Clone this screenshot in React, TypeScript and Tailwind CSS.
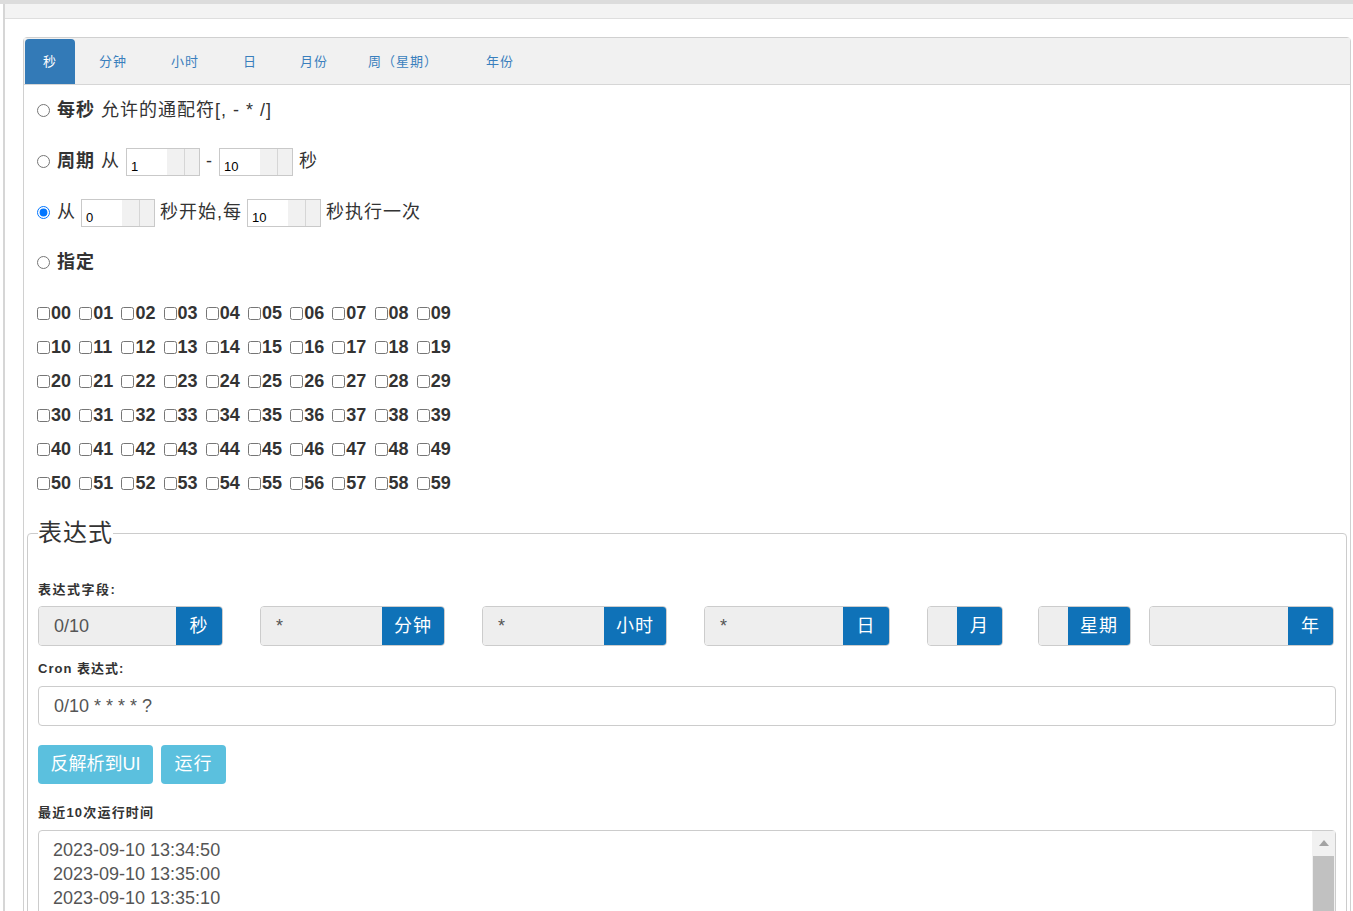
import React from 'react';

const tabs = [
  { label: '秒', w: 'w-[50px]' },
  { label: '分钟', w: 'w-[76px]' },
  { label: '小时', w: 'w-[68px]' },
  { label: '日', w: 'w-[62px]' },
  { label: '月份', w: 'w-[66px]' },
  { label: '周（星期）', w: 'w-[112px]' },
  { label: '年份', w: 'w-[82px]' },
];

const fields = [
  { addon: '秒', value: '0/10', w: 'w-[185px]', aw: 'w-[46px]', ml: 'ml-0' },
  { addon: '分钟', value: '*', w: 'w-[185px]', aw: 'w-[62px]', ml: 'ml-[37px]' },
  { addon: '小时', value: '*', w: 'w-[185px]', aw: 'w-[62px]', ml: 'ml-[37px]' },
  { addon: '日', value: '*', w: 'w-[186px]', aw: 'w-[46px]', ml: 'ml-[37px]' },
  { addon: '月', value: '', w: 'w-[76px]', aw: 'w-[45px]', ml: 'ml-[37px]' },
  { addon: '星期', value: '', w: 'w-[93px]', aw: 'w-[62px]', ml: 'ml-[35px]' },
  { addon: '年', value: '', w: 'w-[185px]', aw: 'w-[45px]', ml: 'ml-[18px]' },
];

const runTimes = ['2023-09-10 13:34:50', '2023-09-10 13:35:00', '2023-09-10 13:35:10'];

function NumberBox({ value }: { value: string }) {
  return (
    <div className="flex h-[28px] w-[74px] border border-[#c9c9c9] bg-white">
      <span className="w-[40px] pl-[4px] pt-[10px] text-[13px] leading-[16px] tracking-normal text-black">{value}</span>
      <span className="w-[17px] bg-[#f1f1f1]" />
      <span className="flex-1 border-l border-[#d6d6d6] bg-[#f1f1f1]" />
    </div>
  );
}

export default function App() {
  const rows = Array.from({ length: 6 }, (_, r) =>
    Array.from({ length: 10 }, (_, c) => String(r * 10 + c).padStart(2, '0'))
  );

  return (
    <div className="min-h-[911px] overflow-hidden bg-white font-['Liberation_Sans','Noto_Sans_CJK_SC',sans-serif] text-[#333]">
      <div className="h-[4px] bg-[#dcdcdc]" />
      <div className="ml-[3px] border-l-2 border-[#d6d6d6]">
        <div className="h-[15px] border-b border-[#dedede] bg-[#f3f3f3]" />
        <div className="pl-[18px] pr-[2px] pt-[18px]">
          <div className="rounded-t-[4px] border border-[#d0d0d0]">
            {/* tabs */}
            <div className="flex h-[47px] border-b border-[#d6d6d6] bg-[#f1f1f1] pl-[1px] pt-[1px]">
              {tabs.map((t, i) => (
                <div
                  key={t.label}
                  className={`${t.w} flex h-[45px] items-center justify-center text-[13px] tracking-[1px] ${
                    i === 0 ? 'rounded-t-[4px] bg-[#337ab7] text-white' : 'text-[#3a7fbd]'
                  }`}
                >
                  {t.label}
                </div>
              ))}
            </div>

            {/* seconds panel */}
            <div className="pl-[13px] text-[18px]">
              <div className="flex h-[51px] items-center gap-[7px]">
                <input type="radio" name="sec" className="m-0 h-[13px] w-[13px]" />
                <span className="tracking-[1px]">
                  <b>每秒</b> 允许的通配符[, - * /]
                </span>
              </div>
              <div className="flex h-[51px] items-center">
                <input type="radio" name="sec" className="m-0 mr-[7px] h-[13px] w-[13px]" />
                <div className="flex items-center gap-[6px] tracking-[1px]">
                  <b>周期</b>
                  <span>从</span>
                  <NumberBox value="1" />
                  <span>-</span>
                  <NumberBox value="10" />
                  <span>秒</span>
                </div>
              </div>
              <div className="flex h-[51px] items-center">
                <input type="radio" name="sec" defaultChecked className="m-0 mr-[7px] h-[13px] w-[13px]" />
                <div className="flex items-center gap-[5px] tracking-[1px]">
                  <span>从</span>
                  <NumberBox value="0" />
                  <span>秒开始,每</span>
                  <NumberBox value="10" />
                  <span>秒执行一次</span>
                </div>
              </div>
              <div className="flex h-[48px] items-center gap-[7px]">
                <input type="radio" name="sec" className="m-0 h-[13px] w-[13px]" />
                <b className="tracking-[1px]">指定</b>
              </div>

              <div className="pt-[10px]">
                {rows.map((row, r) => (
                  <div key={r} className="flex h-[34px] items-center">
                    {row.map((n) => (
                      <label key={n} className="flex w-[42.2px] items-center">
                        <input type="checkbox" className="m-0 h-[13px] w-[13px]" />
                        <b className="ml-[1px] text-[18px]">{n}</b>
                      </label>
                    ))}
                  </div>
                ))}
              </div>
            </div>

            {/* expression */}
            <fieldset className="ml-[3px] mr-[3px] mt-[19px] rounded-[4px] border border-[#cccccc] px-[10px] pb-[10px]">
              <legend className="text-[24px] leading-[28px] tracking-[1px]">表达式</legend>
              <div className="mt-[34px] text-[13px] font-bold leading-[18px] tracking-[1.5px]">表达式字段:</div>
              <div className="mt-[7px] flex">
                {fields.map((f) => (
                  <div
                    key={f.addon}
                    className={`${f.w} ${f.ml} flex h-[40px] overflow-hidden rounded-[4px] border border-[#cccccc]`}
                  >
                    <div className="flex flex-1 items-center bg-[#eeeeee] pl-[15px] text-[18px] text-[#555]">
                      {f.value}
                    </div>
                    <div className={`${f.aw} flex items-center justify-center bg-[#0f72b8] text-[18px] tracking-[1px] text-white`}>
                      {f.addon}
                    </div>
                  </div>
                ))}
              </div>

              <div className="mt-[14px] text-[13px] font-bold leading-[18px] tracking-[1px]">Cron 表达式:</div>
              <div className="mt-[8px] flex h-[40px] items-center rounded-[4px] border border-[#cccccc] pl-[15px] text-[18px] text-[#555]">
                0/10 * * * * ?
              </div>

              <div className="mt-[19px] flex gap-[8px]">
                <button className="h-[39px] w-[115px] rounded-[4px] bg-[#5bc0de] text-[18px] text-white">反解析到UI</button>
                <button className="h-[39px] w-[65px] rounded-[4px] bg-[#5bc0de] text-[18px] tracking-[1px] text-white">运行</button>
              </div>

              <div className="mt-[20px] text-[13px] font-bold leading-[18px] tracking-[1.2px]">最近10次运行时间</div>
              <div className="mt-[8px] flex h-[120px] rounded-[4px] border border-[#cccccc]">
                <div className="flex-1 pl-[14px] pt-[7px] text-[18px] leading-[24px] text-[#555]">
                  {runTimes.map((t) => (
                    <div key={t}>{t}</div>
                  ))}
                </div>
                <div className="flex w-[23px] flex-col bg-[#f1f1f1] pt-[1px]">
                  <div className="flex h-[22px] items-center justify-center">
                    <svg width="10" height="6" viewBox="0 0 10 6">
                      <path d="M5 0 L10 6 L0 6 Z" fill="#a3a3a3" />
                    </svg>
                  </div>
                  <div className="mx-[1px] mt-[2px] flex-1 bg-[#c1c1c1]" />
                </div>
              </div>
            </fieldset>
          </div>
        </div>
      </div>
    </div>
  );
}
